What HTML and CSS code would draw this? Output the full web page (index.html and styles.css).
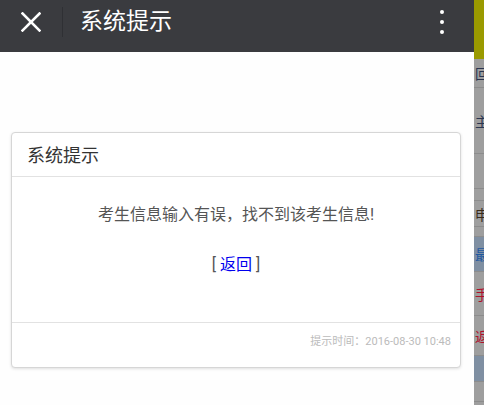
FILE: index.html
```html
<!DOCTYPE html>
<html lang="zh-CN">
<head>
    <meta charset="UTF-8">
    <meta name="viewport" content="width=device-width, initial-scale=1.0">
    <title>系统提示</title>
    <link rel="stylesheet" href="styles.css">
</head>
<body>
    <div class="screen">
        <div class="app">
            <header class="topbar">
                <div class="topbar-row">
                    <svg class="close-icon" width="20" height="20" viewBox="0 0 20 20">
                        <line x1="1.5" y1="1.5" x2="18.5" y2="18.5" stroke="#fff" stroke-width="2.6" stroke-linecap="square"/>
                        <line x1="18.5" y1="1.5" x2="1.5" y2="18.5" stroke="#fff" stroke-width="2.6" stroke-linecap="square"/>
                    </svg>
                    <span class="divider"></span>
                    <h1 class="title">系统提示</h1>
                    <div class="more">
                        <span></span><span></span><span></span>
                    </div>
                </div>
            </header>
            <main class="content">
                <div class="dialog">
                    <div class="dialog-head">系统提示</div>
                    <div class="dialog-body">
                        <p class="message">考生信息输入有误，找不到该考生信息!</p>
                        <p class="back">[ <a href="#">返回</a> ]</p>
                    </div>
                    <div class="dialog-foot">提示时间：2016-08-30 10:48</div>
                </div>
            </main>
        </div>
        <!-- page underneath, peeking out on the right -->
        <aside class="behind">
            <div class="b-top"></div>
            <div class="b-row dark" style="height: 29px">回</div>
            <div class="b-row dark" style="height: 66px">主题</div>
            <div class="b-row" style="height: 35px"></div>
            <div class="b-row" style="height: 12px"></div>
            <div class="b-row brown" style="height: 26px">申请</div>
            <div class="b-row" style="height: 10px"></div>
            <div class="b-row blue" style="height: 35px">最新</div>
            <div class="b-row red" style="height: 44px">手机</div>
            <div class="b-row red" style="height: 40px">返回</div>
            <div class="b-row blue" style="height: 26px"></div>
            <div class="b-row" style="height: 20px"></div>
        </aside>
    </div>
</body>
</html>
```

FILE: styles.css
```css
body {
    margin: 0;
    padding: 0;
    font-family: "Roboto", "Noto Sans CJK SC", sans-serif;
    background-color: #fefefe;
}
.screen {
    display: flex;
    width: 484px;
    height: 405px;
    overflow: hidden;
}
.app {
    width: 474px;
    flex-shrink: 0;
    background-color: #fefefe;
}
.topbar {
    background: #3a3b3f;
    height: 52px;
    color: #fff;
}
.topbar-row {
    display: flex;
    align-items: center;
    height: 44px;
}
.close-icon {
    margin-left: 21px;
    flex-shrink: 0;
}
.divider {
    width: 1px;
    height: 30px;
    margin-left: 21px;
    background: #2f3034;
}
.title {
    margin: 0 0 0 17px;
    font-size: 23px;
    font-weight: normal;
    line-height: 30px;
    flex: 1;
}
.more {
    display: flex;
    flex-direction: column;
    gap: 6px;
    margin-right: 30px;
}
.more span {
    display: block;
    width: 4px;
    height: 4px;
    border-radius: 50%;
    background: #fff;
}
.content {
    padding: 80px 13px 0 11px;
}
.dialog {
    border: 1px solid #d6d6d6;
    border-radius: 4px;
    background: #fff;
    box-shadow: 0 1px 3px rgba(0,0,0,0.12);
}
.dialog-head {
    height: 43px;
    padding: 0 15px;
    line-height: 46px;
    font-size: 18px;
    color: #333;
    border-bottom: 1px solid #e2e2e2;
}
.dialog-body {
    padding: 26px 10px 45px;
    text-align: center;
    border-bottom: 1px solid #e2e2e2;
}
.message, .back {
    margin: 0;
    font-size: 16px;
    line-height: 24px;
    color: #555;
}
.back {
    margin-top: 26px;
}
.back a {
    color: #0000ee;
    text-decoration: none;
}
.dialog-foot {
    height: 44px;
    padding: 0 9px;
    box-sizing: border-box;
    padding-top: 11px;
    text-align: right;
    font-size: 11px;
    line-height: 16px;
    color: #bbb;
}
.behind {
    width: 10px;
    flex-shrink: 0;
    background: #9e9e9e;
    font-family: "Noto Sans CJK SC", sans-serif;
    font-size: 14px;
    white-space: nowrap;
    overflow: hidden;
}
.b-top {
    height: 59px;
    background: #9a9a00;
}
.b-row {
    box-sizing: border-box;
    border-bottom: 1px solid #8c8c8c;
    display: flex;
    align-items: center;
    padding-left: 1px;
    color: #333;
}
.b-row.dark {
    color: #2a3550;
}
.b-row.brown {
    color: #3a2a1a;
}
.b-row.blue {
    background: #7f8fa2;
    color: #1f58a0;
}
.b-row.red {
    color: #b0102a;
}
```
